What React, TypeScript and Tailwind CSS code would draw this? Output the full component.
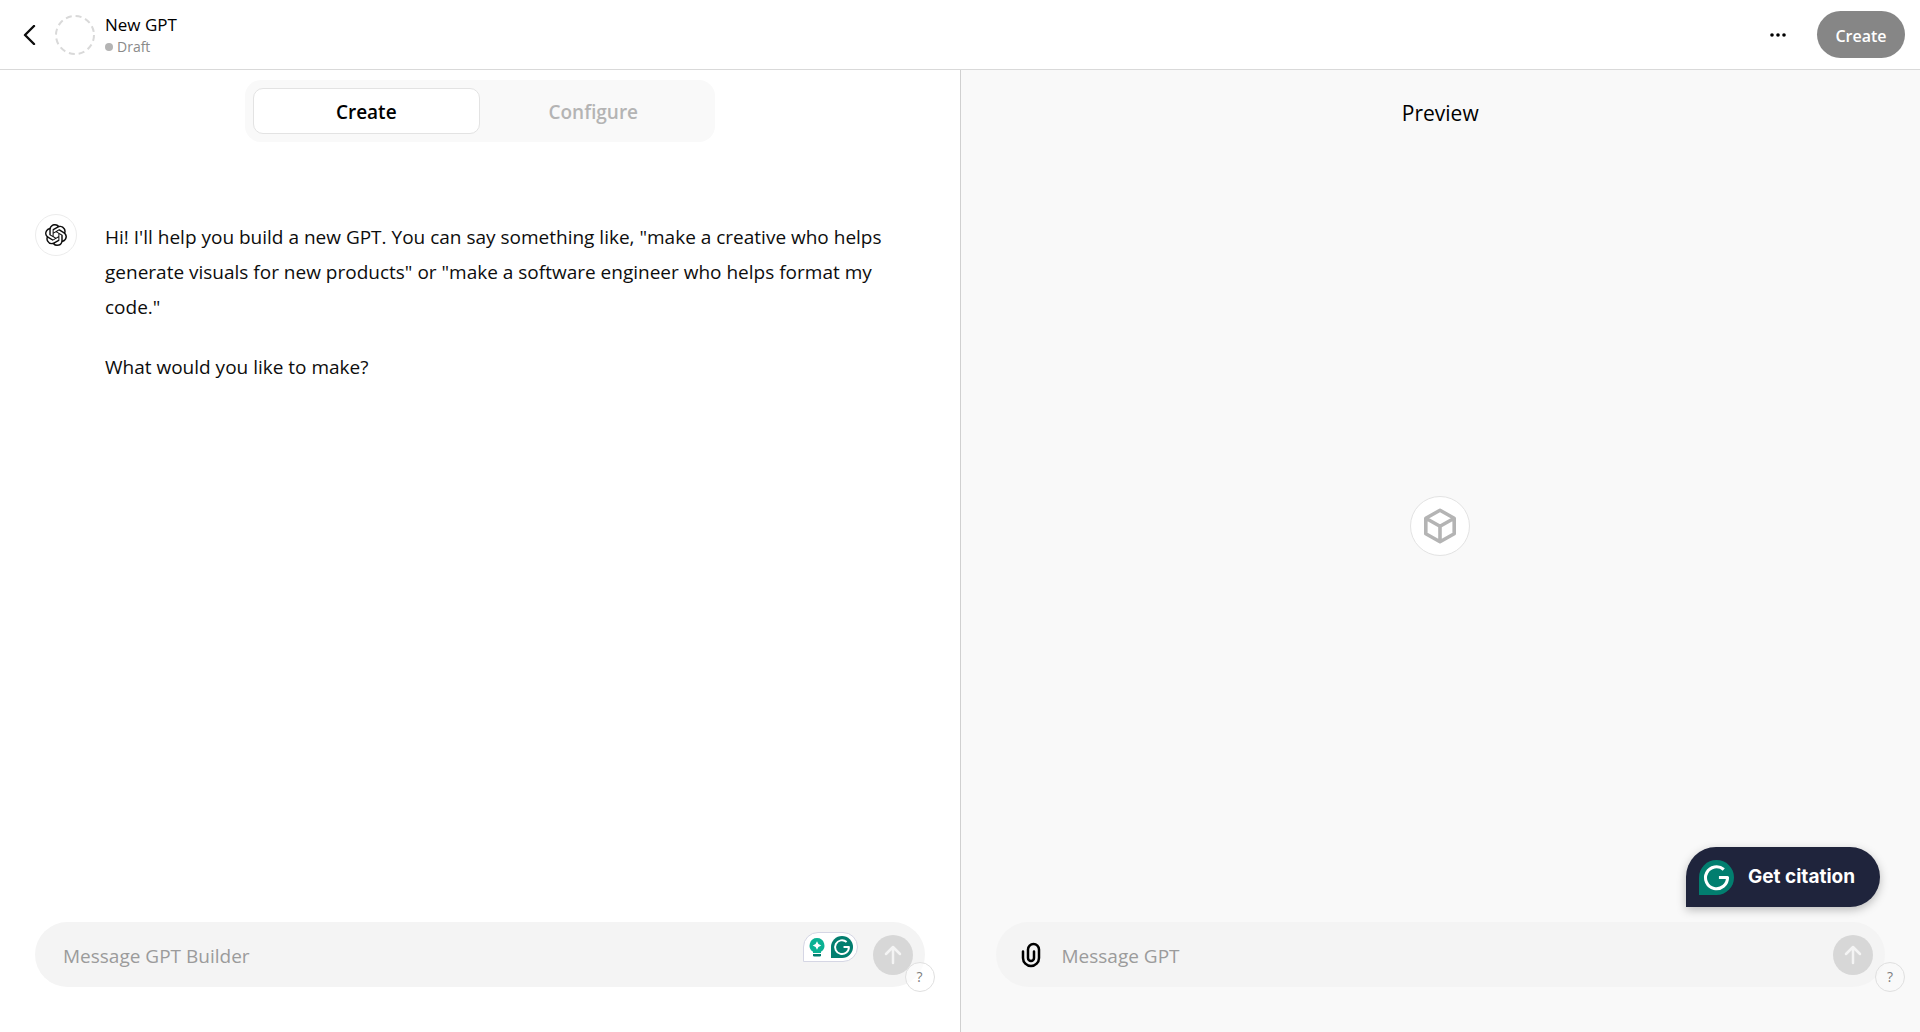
import React, { useState } from "react";
import { SiOpenai } from "react-icons/si";

const tabs = ["Create", "Configure"];

function GrammarlyMark({ className }: { className?: string }) {
    return (
        <svg viewBox="0 0 36 36" className={className} aria-hidden="true">
            <path d="M0 36V18a18 18 0 1 1 18 18z" fill="#027e6f" />
            <path
                d="M25.5 9.8A11.3 11.3 0 1 0 29.3 18H20.5"
                fill="none"
                stroke="#fff"
                strokeWidth="3.2"
                strokeLinejoin="round"
            />
        </svg>
    );
}

function ArrowUpIcon() {
    return (
        <svg viewBox="0 0 20 20" className="w-5 h-5" fill="none" stroke="currentColor" strokeWidth="2.5" strokeLinecap="round" strokeLinejoin="round" aria-hidden="true">
            <path d="M10 18V2M3 9l7-7 7 7" />
        </svg>
    );
}

interface ComposerProps {
    id: string;
    placeholder: string;
    attach?: boolean;
    assistant?: boolean;
}

function Composer({ id, placeholder, attach, assistant }: ComposerProps) {
    const [message, setMessage] = useState("");

    return (
        <form
            onSubmit={(e) => e.preventDefault()}
            className={`flex items-center h-[65px] rounded-full bg-[#f4f4f4] pr-3 ${attach ? "pl-[25px]" : "pl-7"}`}
        >
            {attach && (
                <button type="button" aria-label="Attach files" className="mr-[21px] text-black">
                    <svg viewBox="0 0 20 28" className="w-5 h-7" fill="none" stroke="currentColor" strokeWidth="2.5" strokeLinecap="round" aria-hidden="true">
                        <path d="M2 10.5V17a8 8 0 0 0 16 0V8.5a5.5 5.5 0 0 0-11 0V17a3 3 0 0 0 6 0v-6.5" />
                    </svg>
                </button>
            )}
            <input
                id={id}
                type="text"
                aria-label={placeholder}
                placeholder={placeholder}
                value={message}
                onChange={(e) => setMessage(e.target.value)}
                className="flex-1 min-w-0 h-10 pt-0.5 bg-transparent text-[19px] text-[#0d0d0d] placeholder:text-[#9b9b9b] outline-none"
            />
            {assistant && (
                <div className="flex items-center justify-center gap-1 w-[55px] h-[30px] mr-[15px] mb-4 bg-white border border-[#d5d6e4] rounded-full rounded-bl-none">
                    <svg viewBox="0 0 20 22" className="w-5 h-[22px]" aria-hidden="true">
                        <path d="M10 2a7.5 7.5 0 0 0-4 13.8V17h8v-1.2A7.5 7.5 0 0 0 10 2z" fill="#0bb193" />
                        <path d="M10 5.2 11.4 8.1 14.3 9.5 11.4 10.9 10 13.8 8.6 10.9 5.7 9.5 8.6 8.1z" fill="#fff" />
                        <path d="M6 18h8v1.2a1.3 1.3 0 0 1-1.3 1.3H7.300A1.3 1.3 0 0 1 6 19.200z" fill="#027e6f" />
                    </svg>
                    <GrammarlyMark className="w-[22px] h-[22px]" />
                </div>
            )}
            <button
                type="submit"
                aria-label="Send message"
                className="flex items-center justify-center w-10 h-10 rounded-full bg-[#d7d7d7] text-[#f4f4f4]"
            >
                <ArrowUpIcon />
            </button>
        </form>
    );
}

function HelpButton({ className }: { className: string }) {
    return (
        <button
            type="button"
            aria-label="Help"
            className={`absolute flex items-center justify-center w-[30px] h-[30px] rounded-full border border-[#e0e0e0] text-sm text-[#7d7d7d] ${className}`}
        >
            ?
        </button>
    );
}

export default function App() {
    const [activeTab, setActiveTab] = useState("Create");

    return (
        <div className="flex flex-col h-screen bg-white text-[#0d0d0d] font-['Segoe_UI','Open_Sans',sans-serif]">
            {/* Header */}
            <header className="flex items-center h-[70px] shrink-0 pl-5 pr-[15px] border-b border-[#d9d9d9]">
                <a href="#back" aria-label="Back" className="mr-[15px]">
                    <svg viewBox="0 0 20 20" className="w-5 h-5" fill="none" stroke="currentColor" strokeWidth="2.4" strokeLinecap="round" strokeLinejoin="round" aria-hidden="true">
                        <path d="M14 1 5 10l9 9" />
                    </svg>
                </a>
                <svg viewBox="0 0 40 40" className="w-10 h-10 mr-[10px]" aria-hidden="true">
                    <circle cx="20" cy="20" r="19" fill="none" stroke="#d9d9d9" strokeWidth="2" strokeDasharray="6 3.950" />
                </svg>
                <div className="flex flex-col pt-0.5">
                    <h1 className="text-[17px] leading-[22px] font-medium text-black">New GPT</h1>
                    <div className="flex items-center gap-1 text-sm leading-[22px] text-[#8a8a8a]">
                        <span className="w-2 h-2 rounded-full bg-[#b4b4b4]" />
                        Draft
                    </div>
                </div>
                <div className="flex items-center gap-[27px] ml-auto">
                    <button type="button" aria-label="More options" className="flex items-center justify-center w-6 h-10">
                        <svg viewBox="0 0 16 4" className="w-4 h-1" aria-hidden="true">
                            <circle cx="2" cy="2" r="1.8" />
                            <circle cx="8" cy="2" r="1.8" />
                            <circle cx="14" cy="2" r="1.8" />
                        </svg>
                    </button>
                    <button type="button" className="w-[88px] h-[47px] pt-0.5 rounded-full bg-[#868686] text-base font-semibold text-white">
                        Create
                    </button>
                </div>
            </header>

            <main className="flex flex-1 min-h-0">
                {/* Builder */}
                <section className="flex flex-col flex-1 min-w-0 px-[35px] pt-[10px] pb-[45px]">
                    <div role="tablist" className="grid grid-cols-2 self-center w-[470px] h-[62px] p-2 rounded-2xl bg-[#f9f9f9]">
                        {tabs.map((tab) => (
                            <button
                                key={tab}
                                type="button"
                                role="tab"
                                aria-selected={activeTab === tab}
                                onClick={() => setActiveTab(tab)}
                                className={`pt-0.5 rounded-[10px] border text-[19px] font-semibold ${
                                    activeTab === tab
                                        ? "bg-white border-[#e3e3e3] text-black"
                                        : "border-transparent text-[#b4b4b4]"
                                }`}
                            >
                                {tab}
                            </button>
                        ))}
                    </div>

                    <div className="flex flex-1 items-start gap-7 pt-[72px]">
                        <div className="flex items-center justify-center shrink-0 w-[42px] h-[42px] rounded-full border border-[#ececec]">
                            <SiOpenai className="w-[22px] h-[22px]" />
                        </div>
                        <div className="flex flex-col gap-[25px] pt-[6px] pr-5 text-[19px] leading-[35px]">
                            <p>
                                Hi! I'll help you build a new GPT. You can say something like, "make a creative who helps
                                generate visuals for new products" or "make a software engineer who helps format my code."
                            </p>
                            <p>What would you like to make?</p>
                        </div>
                    </div>

                    <div className="relative">
                        <Composer id="builder-message" placeholder="Message GPT Builder" assistant />
                        <HelpButton className="-right-[10px] -bottom-[5px] bg-white/60" />
                    </div>
                </section>

                {/* Preview */}
                <section className="flex flex-col flex-1 min-w-0 pl-[35px] pr-[35px] pt-7 pb-[45px] border-l border-[#d0d0d0] bg-[#f9f9f9]">
                    <h2 className="text-center text-[21px] leading-[30px] font-medium text-black">Preview</h2>

                    <div className="flex flex-1 items-center justify-center pt-0.5">
                        <div className="flex items-center justify-center w-[60px] h-[60px] rounded-full border border-[#e3e3e3] bg-white text-[#b4b4b4]">
                            <svg viewBox="0 0 36 38" className="w-9 h-[38px]" fill="none" stroke="currentColor" strokeWidth="3.6" strokeLinejoin="round" aria-hidden="true">
                                <path d="M18 3.300 32.200 11.300V26.700L18 34.700 3.800 26.700V11.300zM3.800 11.300 18 19.300 32.200 11.300M18 19.300V34.700" />
                            </svg>
                        </div>
                    </div>

                    <div className="relative">
                        <Composer id="preview-message" placeholder="Message GPT" attach />
                        <button
                            type="button"
                            className="absolute right-[5px] bottom-20 flex items-center gap-[14px] w-[194px] h-[60px] pl-[13px] rounded-full rounded-bl-none bg-[#1f243c] shadow-[0_3px_10px_rgba(0,0,0,0.25)] font-['Inter',sans-serif] text-[19px] font-bold text-white whitespace-nowrap"
                        >
                            <GrammarlyMark className="w-[35px] h-[35px]" />
                            Get citation
                        </button>
                        <HelpButton className="-right-5 -bottom-[5px] bg-[#f9f9f9]/60" />
                    </div>
                </section>
            </main>
        </div>
    );
}
